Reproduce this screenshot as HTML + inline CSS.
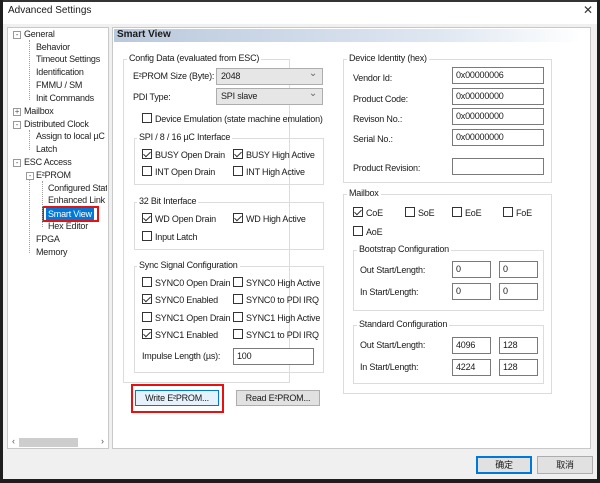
<!DOCTYPE html>
<html><head><meta charset="utf-8"><style>
*{margin:0;padding:0;box-sizing:border-box}
body{width:600px;height:483px;background:#1e1e1e;position:relative;overflow:hidden;font-family:"Liberation Sans","Noto Sans CJK SC",sans-serif;font-size:9px;letter-spacing:-0.2px;color:#1a1a1a}
.a{position:absolute;white-space:nowrap}
.win{left:3px;top:0;width:594px;height:479px;background:#f0f0f0;border-top:2px solid #333}
.title{left:3px;top:2px;width:594px;height:22px;background:#fff}
.panel{background:#fff;border:1px solid #c8c8c8}
.grp{border:1px solid #dcdcdc}
.gt{background:#fff;padding:0 2px;color:#1a1a1a}
.in{background:#fff;border:1px solid #7a7a7a;height:17px;padding:1px 3px;line-height:13px}
.cb{width:10px;height:10px;border:1px solid #333;background:#fff;display:inline-block;vertical-align:-1px;margin-right:3px;position:relative}
.ck::after{content:"";position:absolute;left:2px;top:0px;width:3px;height:6px;border:solid #333;border-width:0 1.3px 1.3px 0;transform:rotate(45deg)}
.combo{background:#e6e6e6;border:1px solid #adadad;height:17px;padding:1px 4px;line-height:13px}
.combo::after{content:"⌄";position:absolute;right:5px;top:-2px;color:#666;font-size:10px}
.btn{background:#e1e1e1;border:1px solid #adadad;text-align:center;line-height:14px}
.tl{color:#222}
.line{position:absolute;border-color:#a0a0a0;border-style:dotted}
</style></head><body>
<div class="a win"></div>
<div class="a title"></div>
<div class="a" style="left:8px;top:5px;font-size:10px;letter-spacing:0">Advanced Settings</div>
<div class="a" style="left:583px;top:3px;font-size:12px;color:#333">✕</div>

<!-- tree -->
<div class="a panel" style="left:7px;top:27px;width:102px;height:422px"></div>
<div class="a" style="left:19px;top:438px;width:59px;height:9px;background:#cdcdcd"></div>
<div class="a" style="left:12px;top:436px;font-size:9px;color:#555">‹</div>
<div class="a" style="left:101px;top:436px;font-size:9px;color:#555">›</div>
<div class="a tl" style="left:24px;top:29px">General</div>
<div class="a tl" style="left:36px;top:42px">Behavior</div>
<div class="a tl" style="left:36px;top:54px">Timeout Settings</div>
<div class="a tl" style="left:36px;top:67px">Identification</div>
<div class="a tl" style="left:36px;top:80px">FMMU / SM</div>
<div class="a tl" style="left:36px;top:93px">Init Commands</div>
<div class="a tl" style="left:24px;top:106px">Mailbox</div>
<div class="a tl" style="left:24px;top:119px">Distributed Clock</div>
<div class="a tl" style="left:36px;top:131px">Assign to local µC</div>
<div class="a tl" style="left:36px;top:144px">Latch</div>
<div class="a tl" style="left:24px;top:157px">ESC Access</div>
<div class="a tl" style="left:36px;top:170px">E²PROM</div>
<div class="a tl" style="left:48px;top:183px;width:59px;overflow:hidden">Configured Station</div>
<div class="a tl" style="left:48px;top:195px;width:59px;overflow:hidden">Enhanced Link Detection</div>
<div class="a" style="left:42px;top:206px;width:57px;height:16px;border:2px solid #e81010"></div>
<div class="a" style="left:46px;top:208px;padding:0 2px;background:#0078d7;color:#fff;line-height:12px">Smart View</div>
<div class="a tl" style="left:48px;top:221px">Hex Editor</div>
<div class="a tl" style="left:36px;top:234px">FPGA</div>
<div class="a tl" style="left:36px;top:247px">Memory</div>
<div class="a" style="left:13px;top:31px;width:8px;height:8px;border:1px solid #999;font-size:8px;line-height:5px;text-align:center;color:#555;background:#fff">-</div>
<div class="a" style="left:13px;top:108px;width:8px;height:8px;border:1px solid #999;font-size:8px;line-height:6px;text-align:center;color:#555;background:#fff">+</div>
<div class="a" style="left:13px;top:121px;width:8px;height:8px;border:1px solid #999;font-size:8px;line-height:5px;text-align:center;color:#555;background:#fff">-</div>
<div class="a" style="left:13px;top:159px;width:8px;height:8px;border:1px solid #999;font-size:8px;line-height:5px;text-align:center;color:#555;background:#fff">-</div>
<div class="a" style="left:26px;top:172px;width:8px;height:8px;border:1px solid #999;font-size:8px;line-height:5px;text-align:center;color:#555;background:#fff">-</div>
<div class="line" style="left:29px;top:40px;height:60px;border-width:0 0 0 1px"></div>
<div class="line" style="left:29px;top:130px;height:20px;border-width:0 0 0 1px"></div>
<div class="line" style="left:29px;top:180px;height:73px;border-width:0 0 0 1px"></div>
<div class="line" style="left:42px;top:181px;height:46px;border-width:0 0 0 1px"></div>

<!-- main panel -->
<div class="a panel" style="left:112px;top:27px;width:479px;height:422px"></div>
<div class="a" style="left:114px;top:29px;width:468px;height:13px;background:linear-gradient(90deg,#b9c9dc,#dfe7f1 70%,#fff)"></div>
<div class="a" style="left:117px;top:29px;font-weight:bold;font-size:10px;letter-spacing:0">Smart View</div>

<!-- config group -->
<div class="a grp" style="left:123px;top:59px;width:167px;height:324px"></div>
<div class="a gt" style="left:127px;top:53px">Config Data (evaluated from ESC)</div>
<div class="a" style="left:133px;top:71px">E²PROM Size (Byte):</div>
<div class="a combo" style="left:216px;top:68px;width:107px">2048</div>
<div class="a" style="left:133px;top:92px">PDI Type:</div>
<div class="a combo" style="left:216px;top:88px;width:107px">SPI slave</div>
<div class="a" style="left:142px;top:113px"><span class="cb"></span>Device Emulation (state machine emulation)</div>

<div class="a grp" style="left:134px;top:138px;width:190px;height:47px"></div>
<div class="a gt" style="left:137px;top:132px">SPI / 8 / 16 µC Interface</div>
<div class="a" style="left:142px;top:149px"><span class="cb ck"></span>BUSY Open Drain</div>
<div class="a" style="left:233px;top:149px"><span class="cb ck"></span>BUSY High Active</div>
<div class="a" style="left:142px;top:166px"><span class="cb"></span>INT Open Drain</div>
<div class="a" style="left:233px;top:166px"><span class="cb"></span>INT High Active</div>

<div class="a grp" style="left:134px;top:202px;width:190px;height:48px"></div>
<div class="a gt" style="left:137px;top:196px">32 Bit Interface</div>
<div class="a" style="left:142px;top:213px"><span class="cb ck"></span>WD Open Drain</div>
<div class="a" style="left:233px;top:213px"><span class="cb ck"></span>WD High Active</div>
<div class="a" style="left:142px;top:231px"><span class="cb"></span>Input Latch</div>

<div class="a grp" style="left:134px;top:266px;width:190px;height:107px"></div>
<div class="a gt" style="left:137px;top:260px">Sync Signal Configuration</div>
<div class="a" style="left:142px;top:277px"><span class="cb"></span>SYNC0 Open Drain</div>
<div class="a" style="left:233px;top:277px"><span class="cb"></span>SYNC0 High Active</div>
<div class="a" style="left:142px;top:294px"><span class="cb ck"></span>SYNC0 Enabled</div>
<div class="a" style="left:233px;top:294px"><span class="cb"></span>SYNC0 to PDI IRQ</div>
<div class="a" style="left:142px;top:312px"><span class="cb"></span>SYNC1 Open Drain</div>
<div class="a" style="left:233px;top:312px"><span class="cb"></span>SYNC1 High Active</div>
<div class="a" style="left:142px;top:329px"><span class="cb ck"></span>SYNC1 Enabled</div>
<div class="a" style="left:233px;top:329px"><span class="cb"></span>SYNC1 to PDI IRQ</div>
<div class="a" style="left:142px;top:351px">Impulse Length (µs):</div>
<div class="a in" style="left:233px;top:348px;width:81px">100</div>

<div class="a" style="left:131px;top:384px;width:93px;height:29px;border:2px solid #e81010"></div>
<div class="a btn" style="left:135px;top:390px;width:84px;height:16px;background:#e5f1fb;border-color:#0078d7">Write E²PROM...</div>
<div class="a btn" style="left:236px;top:390px;width:84px;height:16px">Read E²PROM...</div>

<!-- device identity -->
<div class="a grp" style="left:343px;top:59px;width:209px;height:124px"></div>
<div class="a gt" style="left:347px;top:53px">Device Identity (hex)</div>
<div class="a" style="left:353px;top:73px">Vendor Id:</div>
<div class="a in" style="left:452px;top:67px;width:92px">0x00000006</div>
<div class="a" style="left:353px;top:94px">Product Code:</div>
<div class="a in" style="left:452px;top:88px;width:92px">0x00000000</div>
<div class="a" style="left:353px;top:114px">Revison No.:</div>
<div class="a in" style="left:452px;top:108px;width:92px">0x00000000</div>
<div class="a" style="left:353px;top:134px">Serial No.:</div>
<div class="a in" style="left:452px;top:129px;width:92px">0x00000000</div>
<div class="a" style="left:353px;top:163px">Product Revision:</div>
<div class="a in" style="left:452px;top:158px;width:92px"></div>

<!-- mailbox -->
<div class="a grp" style="left:343px;top:194px;width:209px;height:200px"></div>
<div class="a gt" style="left:347px;top:188px">Mailbox</div>
<div class="a" style="left:353px;top:207px"><span class="cb ck"></span>CoE</div>
<div class="a" style="left:405px;top:207px"><span class="cb"></span>SoE</div>
<div class="a" style="left:452px;top:207px"><span class="cb"></span>EoE</div>
<div class="a" style="left:503px;top:207px"><span class="cb"></span>FoE</div>
<div class="a" style="left:353px;top:226px"><span class="cb"></span>AoE</div>

<div class="a grp" style="left:353px;top:250px;width:191px;height:61px"></div>
<div class="a gt" style="left:357px;top:244px">Bootstrap Configuration</div>
<div class="a" style="left:360px;top:265px">Out Start/Length:</div>
<div class="a in" style="left:452px;top:261px;width:39px">0</div>
<div class="a in" style="left:499px;top:261px;width:39px">0</div>
<div class="a" style="left:360px;top:287px">In Start/Length:</div>
<div class="a in" style="left:452px;top:283px;width:39px">0</div>
<div class="a in" style="left:499px;top:283px;width:39px">0</div>

<div class="a grp" style="left:353px;top:325px;width:191px;height:59px"></div>
<div class="a gt" style="left:357px;top:319px">Standard Configuration</div>
<div class="a" style="left:360px;top:340px">Out Start/Length:</div>
<div class="a in" style="left:452px;top:337px;width:39px">4096</div>
<div class="a in" style="left:499px;top:337px;width:39px">128</div>
<div class="a" style="left:360px;top:362px">In Start/Length:</div>
<div class="a in" style="left:452px;top:359px;width:39px">4224</div>
<div class="a in" style="left:499px;top:359px;width:39px">128</div>

<div class="a btn" style="left:476px;top:456px;width:56px;height:18px;line-height:16px;border:1px solid #0078d7;box-shadow:inset 0 0 0 1px #0078d7">确定</div>
<div class="a btn" style="left:537px;top:456px;width:56px;height:18px;line-height:16px">取消</div>
</body></html>
